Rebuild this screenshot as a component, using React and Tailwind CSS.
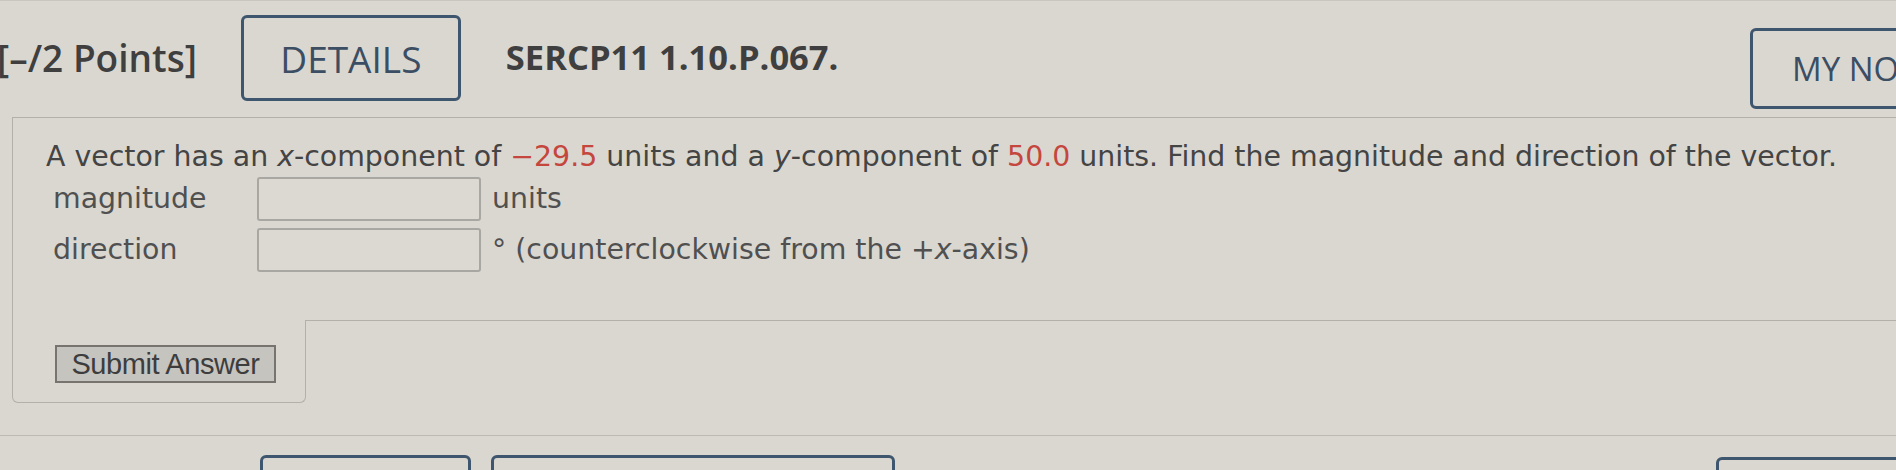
export default function App() {
  const sans = { fontFamily: '"Open Sans", "Noto Sans", sans-serif' }
  const verd = { fontFamily: '"DejaVu Sans", Verdana, sans-serif' }

  return (
    <div className="w-[1896px] h-[470px] overflow-hidden bg-[#dad7d0] text-[#454545]">
      {/* header */}
      <div className="flex items-start h-[117px] border-t border-[#c9c6bf]" style={sans}>
        <span className="-ml-[3px] mt-[38px] text-[37px] leading-none font-semibold text-[#3f3f3f] whitespace-nowrap">
          [–/2 Points]
        </span>
        <div className="ml-[44px] mt-[14px] w-[220px] h-[86px] shrink-0 border-[3px] border-[#3e566e] rounded-md flex items-center justify-center">
          <span className="text-[37px] leading-none text-[#3b4e63]">DETAILS</span>
        </div>
        <span className="ml-[45px] mt-[39px] text-[34.5px] leading-none font-bold text-[#3f3f3f] whitespace-nowrap">
          SERCP11 1.10.P.067.
        </span>
        <div className="ml-auto -mr-[34px] mt-[27px] w-[180px] h-[81px] shrink-0 border-[3px] border-[#3e566e] rounded-md flex items-center pl-[39px] overflow-hidden">
          <span className="text-[33px] leading-none text-[#3b4e63] whitespace-nowrap">MY NOTES</span>
        </div>
      </div>

      {/* question panel */}
      <div className="ml-[12px] border-t border-[#b3b0a9]">
        <div className="h-[202px] border-l border-[#b3b0a9] pl-[33px] pt-[22px]" style={verd}>
          <p className="text-[28.4px] leading-[33px] text-[#444] whitespace-nowrap">
            A vector has an <i>x</i>-component of <span className="text-[#c4463d]">−29.5</span> units and a <i>y</i>-component of <span className="text-[#c4463d]">50.0</span> units. Find the magnitude and direction of the vector.
          </p>
          <div className="mt-[4px] pl-[7px] flex flex-col gap-[7px]">
            <div className="flex items-center">
              <span className="w-[204px] text-[28.4px] text-[#505050]">magnitude</span>
              <div className="w-[224px] h-[44px] border-2 border-[#a9a7a1] rounded-[3px] bg-[#dcd9d2]" />
              <span className="ml-[11px] text-[28.4px] text-[#505050]">units</span>
            </div>
            <div className="flex items-center">
              <span className="w-[204px] text-[28.4px] text-[#505050]">direction</span>
              <div className="w-[224px] h-[44px] border-2 border-[#a9a7a1] rounded-[3px] bg-[#dcd9d2]" />
              <span className="ml-[11px] text-[28.4px] text-[#505050] whitespace-nowrap">
                ° (counterclockwise from the +<i>x</i>-axis)
              </span>
            </div>
          </div>
        </div>
        <div className="flex">
          <div className="w-[294px] h-[83px] border-l border-b border-r border-[#b3b0a9] rounded-b-md pl-[42px] pt-[25px]">
            <button
              className="w-[221px] h-[38px] bg-[#c6c4bf] border-2 border-[#77746f] text-[29px] leading-none text-[#3d3d3d] tracking-[-0.4px]"
              style={{ fontFamily: '"Liberation Sans", Arial, sans-serif' }}
            >
              Submit Answer
            </button>
          </div>
          <div className="flex-1 border-t border-[#b3b0a9]" />
        </div>
      </div>

      {/* footer */}
      <div className="mt-[32px] border-t border-[#bdbab3] flex">
        <div className="ml-[260px] mt-[19px] w-[211px] h-[40px] border-[3px] border-[#3e566e] rounded-md" />
        <div className="ml-[20px] mt-[19px] w-[404px] h-[40px] border-[3px] border-[#3e566e] rounded-md" />
        <div className="ml-auto -mr-[20px] mt-[21px] w-[200px] h-[40px] border-[3px] border-[#3e566e] rounded-md" />
      </div>
    </div>
  )
}
